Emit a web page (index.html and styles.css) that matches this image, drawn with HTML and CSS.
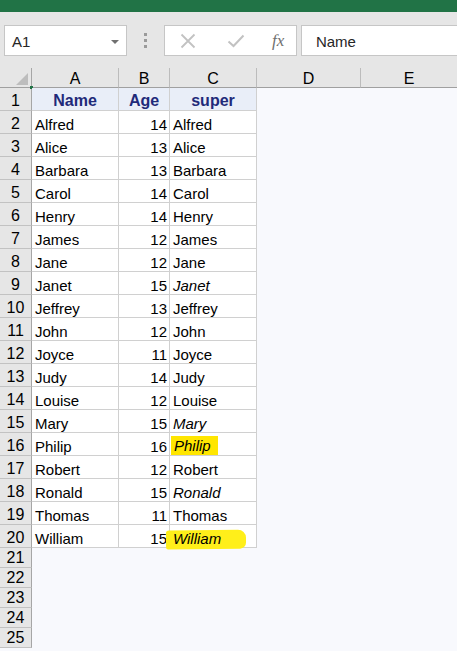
FILE: index.html
```html
<!DOCTYPE html>
<html>
<head>
<meta charset="utf-8">
<link rel="stylesheet" href="styles.css">
</head>
<body>
<div class="appbar"></div>
<div class="fbar">
  <div class="namebox"><span class="ref">A1</span><span class="caret"></span></div>
  <div class="dots"><i></i><i></i><i></i></div>
  <div class="btns">
    <svg class="ic-x" width="16" height="16" viewBox="0 0 16 16"><path d="M1.5 1.5 L14.5 14.5 M14.5 1.5 L1.5 14.5" stroke="#c2c2c2" stroke-width="1.8" fill="none"/></svg>
    <svg class="ic-ok" width="18" height="14" viewBox="0 0 18 14"><path d="M1.5 7.5 L6.5 12 L16.5 1.5" stroke="#c2c2c2" stroke-width="2" fill="none"/></svg>
    <span class="fx">fx</span>
  </div>
  <div class="finput">Name</div>
</div>
<div class="sheet">
  <div class="row hdr">
    <div class="corner"><span class="tri"></span><span class="sel"></span></div>
    <div class="ch">A</div><div class="ch">B</div><div class="ch">C</div><div class="ch">D</div><div class="ch last">E</div>
  </div>
  <div class="row"><div class="rh">1</div><div class="c h">Name</div><div class="c h">Age</div><div class="c h">super</div></div>
  <div class="row"><div class="rh">2</div><div class="c">Alfred</div><div class="c n">14</div><div class="c">Alfred</div></div>
  <div class="row"><div class="rh">3</div><div class="c">Alice</div><div class="c n">13</div><div class="c">Alice</div></div>
  <div class="row"><div class="rh">4</div><div class="c">Barbara</div><div class="c n">13</div><div class="c">Barbara</div></div>
  <div class="row"><div class="rh">5</div><div class="c">Carol</div><div class="c n">14</div><div class="c">Carol</div></div>
  <div class="row"><div class="rh">6</div><div class="c">Henry</div><div class="c n">14</div><div class="c">Henry</div></div>
  <div class="row"><div class="rh">7</div><div class="c">James</div><div class="c n">12</div><div class="c">James</div></div>
  <div class="row"><div class="rh">8</div><div class="c">Jane</div><div class="c n">12</div><div class="c">Jane</div></div>
  <div class="row"><div class="rh">9</div><div class="c">Janet</div><div class="c n">15</div><div class="c it">Janet</div></div>
  <div class="row"><div class="rh">10</div><div class="c">Jeffrey</div><div class="c n">13</div><div class="c">Jeffrey</div></div>
  <div class="row"><div class="rh">11</div><div class="c">John</div><div class="c n">12</div><div class="c">John</div></div>
  <div class="row"><div class="rh">12</div><div class="c">Joyce</div><div class="c n">11</div><div class="c">Joyce</div></div>
  <div class="row"><div class="rh">13</div><div class="c">Judy</div><div class="c n">14</div><div class="c">Judy</div></div>
  <div class="row"><div class="rh">14</div><div class="c">Louise</div><div class="c n">12</div><div class="c">Louise</div></div>
  <div class="row"><div class="rh">15</div><div class="c">Mary</div><div class="c n">15</div><div class="c it">Mary</div></div>
  <div class="row"><div class="rh">16</div><div class="c">Philip</div><div class="c n">16</div><div class="c it"><span class="hl">Philip</span></div></div>
  <div class="row"><div class="rh">17</div><div class="c">Robert</div><div class="c n">12</div><div class="c">Robert</div></div>
  <div class="row"><div class="rh">18</div><div class="c">Ronald</div><div class="c n">15</div><div class="c it">Ronald</div></div>
  <div class="row"><div class="rh">19</div><div class="c">Thomas</div><div class="c n">11</div><div class="c">Thomas</div></div>
  <div class="row"><div class="rh">20</div><div class="c">William</div><div class="c n">15</div><div class="c it marker"><span class="mk">William</span></div></div>
  <div class="row empty"><div class="rh">21</div></div>
  <div class="row empty"><div class="rh">22</div></div>
  <div class="row empty"><div class="rh">23</div></div>
  <div class="row empty"><div class="rh">24</div></div>
  <div class="row empty"><div class="rh">25</div></div>
</div>
</body>
</html>
```
FILE: styles.css
```css
* { box-sizing: border-box; }
html, body { margin: 0; padding: 0; }
body {
  width: 457px;
  height: 651px;
  overflow: hidden;
  background: #f8f9fd;
  font-family: "Liberation Sans", Arial, sans-serif;
  color: #000;
}
.appbar { height: 12px; background: #217346; }
.fbar {
  height: 56px;
  background: #e6e6e6;
  display: flex;
  align-items: flex-start;
  padding-top: 13px;
  padding-left: 4px;
  white-space: nowrap;
}
.namebox {
  width: 126px;
  height: 31px;
  background: #fff;
  border: 1px solid #c6c6c6;
  display: flex;
  align-items: center;
  justify-content: space-between;
  padding: 1px 7px 0 7px;
  font-size: 15px;
  color: #262626;
}
.caret {
  width: 0; height: 0;
  border-left: 4px solid transparent;
  border-right: 4px solid transparent;
  border-top: 4px solid #707070;
  margin-top: 1px;
}
.dots {
  width: 38px;
  height: 31px;
  display: flex;
  flex-direction: column;
  align-items: center;
  justify-content: center;
  gap: 3px;
}
.dots i { display: block; width: 3px; height: 3px; background: #9a9a9a; }
.btns {
  width: 136px;
  height: 31px;
  background: #fff;
  border: 1px solid #c6c6c6;
  display: flex;
  align-items: center;
  padding-left: 15px;
}
.ic-x { margin-right: 31px; }
.ic-ok { margin-right: 27px; }
.fx {
  font-family: "Liberation Serif", "Times New Roman", serif;
  font-style: italic;
  font-size: 17px;
  color: #6f6f6f;
}
.finput {
  margin-left: 4px;
  width: 160px;
  height: 31px;
  background: #fff;
  border: 1px solid #c6c6c6;
  border-right: none;
  padding: 1px 0 0 14px;
  display: flex;
  align-items: center;
  font-size: 15px;
  color: #262626;
}
.sheet { display: flex; flex-direction: column; }
.row {
  display: grid;
  grid-template-columns: 32px 87px 51px 87px 104px 1fr;
  grid-template-rows: 23px;
  height: 23px;
}
.row.empty { height: 20px; grid-template-rows: 20px; }
.row.hdr { height: 20px; grid-template-rows: 20px; background: #e6e6e6; }
.corner {
  position: relative;
  border-right: 1px solid #a6a6a6;
  border-bottom: 1px solid #a0a0a0;
}
.tri {
  position: absolute;
  right: 3px;
  bottom: 2px;
  width: 12px;
  height: 12px;
  background: #bdbdbd;
  clip-path: polygon(100% 0, 100% 100%, 0 100%);
}
.sel {
  position: absolute;
  right: -2px;
  bottom: -2px;
  width: 3px;
  height: 3px;
  background: #217346;
}
.ch {
  border-right: 1px solid #bcbcbc;
  border-bottom: 1px solid #a0a0a0;
  display: flex;
  align-items: center;
  justify-content: center;
  font-size: 16px;
  padding-top: 2px;
}
.ch.last { border-right: none; }
.rh {
  background: #e6e6e6;
  border-right: 1px solid #a6a6a6;
  border-bottom: 1px solid #c2c2c2;
  display: flex;
  align-items: center;
  justify-content: center;
  font-size: 16px;
  padding-top: 3px;
}
.row.empty .rh { padding-top: 1px; }
.c {
  position: relative;
  background: #fff;
  border-right: 1px solid #d0d0d0;
  border-bottom: 1px solid #d0d0d0;
  display: flex;
  align-items: center;
  padding: 4px 3px 0 3px;
  font-size: 15px;
  white-space: nowrap;
  overflow: visible;
}
.c.n { justify-content: flex-end; padding-right: 2px; }
.c.h {
  background: #e9eef8;
  justify-content: center;
  font-weight: bold;
  font-size: 16px;
  color: #1f2a7a;
}
.c.it { font-style: italic; }
.hl {
  display: inline-block;
  background: #ffe600;
  margin: -3px 0 -2px -2px;
  padding: 1px 7px 1px 3px;
  line-height: 17px;
}
.marker .mk { position: relative; z-index: 1; }
.marker::before {
  content: "";
  position: absolute;
  left: -4px;
  top: 5px;
  width: 80px;
  height: 19px;
  background: #ffef1a;
  border-radius: 3px 8px 6px 2px;
  transform: rotate(-0.6deg);
}
```
